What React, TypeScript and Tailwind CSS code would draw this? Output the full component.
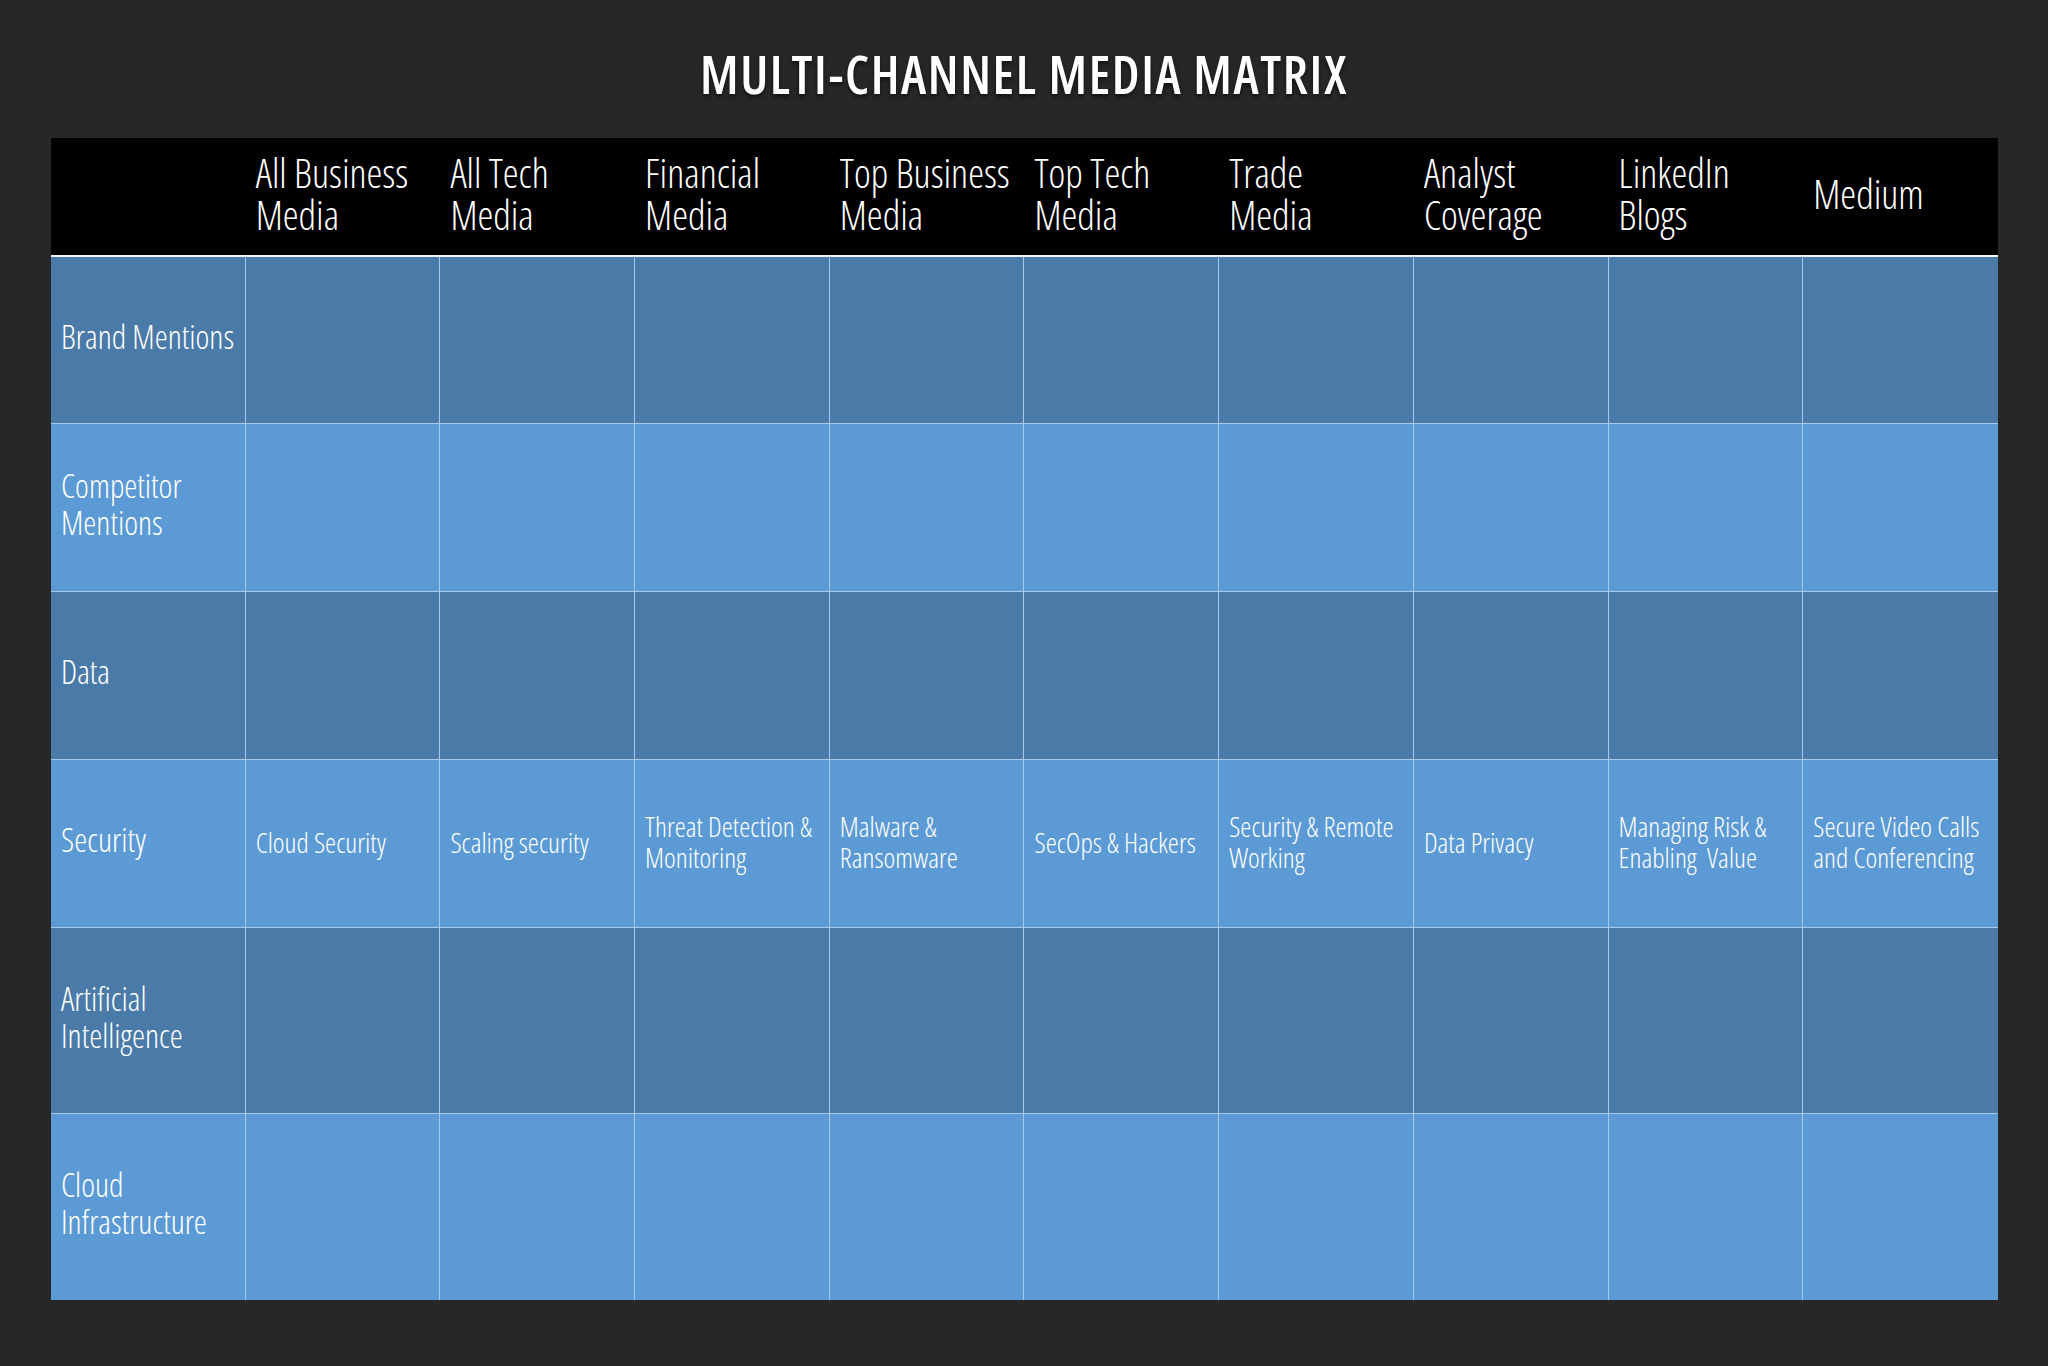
const columns: string[][] = [
  ["All Business", "Media"],
  ["All Tech", "Media"],
  ["Financial", "Media"],
  ["Top Business", "Media"],
  ["Top Tech", "Media"],
  ["Trade", "Media"],
  ["Analyst", "Coverage"],
  ["LinkedIn", "Blogs"],
  ["Medium"],
];

type Row = { label: string[]; cells: string[][]; h: string; dark: boolean };

const empty: string[][] = Array.from({ length: 9 }, () => []);

const rows: Row[] = [
  { label: ["Brand Mentions"], cells: empty, h: "h-[167px]", dark: true },
  { label: ["Competitor", "Mentions"], cells: empty, h: "h-[168px]", dark: false },
  { label: ["Data"], cells: empty, h: "h-[168px]", dark: true },
  {
    label: ["Security"],
    cells: [
      ["Cloud Security"],
      ["Scaling security"],
      ["Threat Detection &", "Monitoring"],
      ["Malware &", "Ransomware"],
      ["SecOps & Hackers"],
      ["Security & Remote", "Working"],
      ["Data Privacy"],
      ["Managing Risk &", "Enabling  Value"],
      ["Secure Video Calls", "and Conferencing"],
    ],
    h: "h-[168px]",
    dark: false,
  },
  { label: ["Artificial", "Intelligence"], cells: empty, h: "h-[186px]", dark: true },
  { label: ["Cloud", "Infrastructure"], cells: empty, h: "h-[186px]", dark: false },
];

export default function App() {
  return (
    <div className="min-h-[1366px] w-full bg-[#272727] font-['Open_Sans',sans-serif] [font-stretch:75%] text-white">
      <h1 className="pt-[44px] text-center text-[52px] font-semibold leading-[60px] tracking-[1.6px] [text-shadow:0_3px_4px_rgba(0,0,0,0.55)]">
        MULTI-CHANNEL MEDIA MATRIX
      </h1>
      <div className="ml-[51px] mt-[34px] w-[1947px]">
        <div className="grid h-[117px] grid-cols-10 bg-black">
          <div />
          {columns.map((c, i) => (
            <div key={i} className="flex flex-col justify-center pb-[6px] pl-[10px] text-[40px] font-light leading-[42px]">
              {c.map((l, j) => (
                <div key={j} className="whitespace-pre">
                  {l}
                </div>
              ))}
            </div>
          ))}
        </div>
        <div className="h-[2px] bg-[#eef4fb]" />
        {rows.map((r, ri) => (
          <div
            key={ri}
            className={`grid grid-cols-10 ${r.h} ${r.dark ? "bg-[#4a7aa8]" : "bg-[#5b9ad5]"} ${
              ri < rows.length - 1 ? "border-b border-[#a9c9ea]" : ""
            }`}
          >
            <div className="flex flex-col justify-center border-r border-[#a9c9ea] pb-[8px] pl-[10px] text-[33px] font-light leading-[37px]">
              {r.label.map((l, j) => (
                <div key={j} className="whitespace-pre">
                  {l}
                </div>
              ))}
            </div>
            {r.cells.map((c, ci) => (
              <div
                key={ci}
                className={`flex flex-col justify-center pb-[3px] pl-[10px] text-[28px] font-light leading-[31px] ${
                  ci < 8 ? "border-r border-[#a9c9ea]" : ""
                }`}
              >
                {c.map((l, j) => (
                  <div key={j} className="whitespace-pre">
                    {l}
                  </div>
                ))}
              </div>
            ))}
          </div>
        ))}
      </div>
    </div>
  );
}
